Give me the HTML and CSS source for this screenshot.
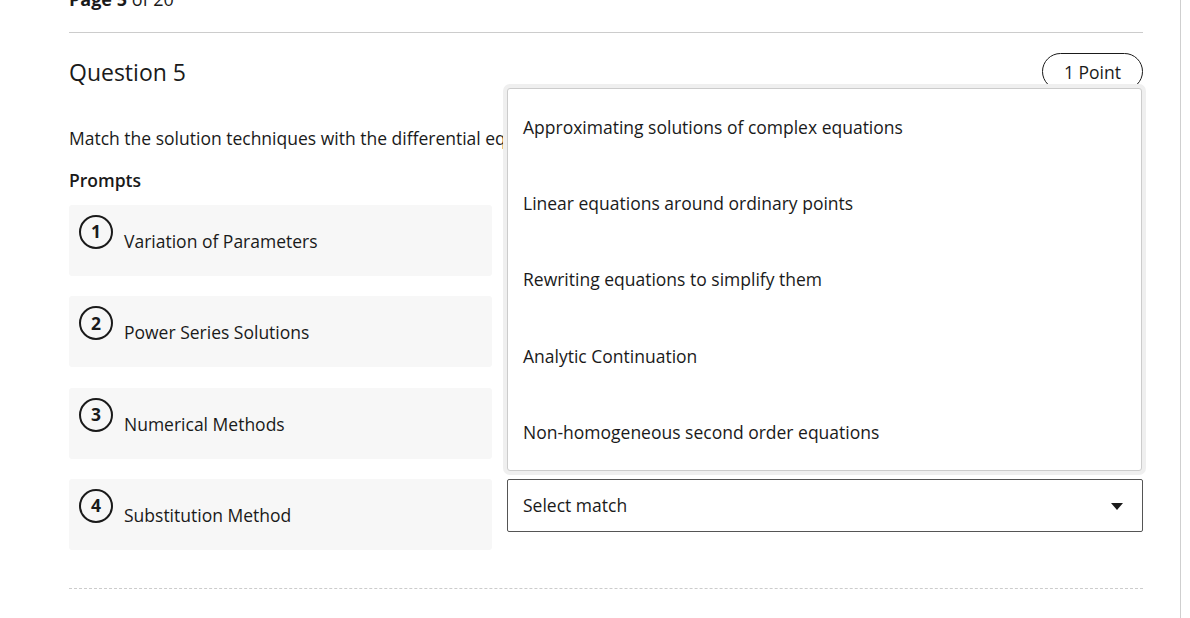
FILE: index.html
```html
<!DOCTYPE html>
<html>
<head>
<meta charset="utf-8">
<link rel="stylesheet" href="styles.css">
</head>
<body>
<div class="frame">
  <div class="page">
    <div class="pager"><b>Page 5</b> of 20</div>
    <div class="question">
      <div class="q-head">
        <h2 class="q-title">Question 5</h2>
        <span class="points">1 Point</span>
      </div>
      <p class="q-text">Match the solution techniques with the differential equations they are used for.</p>
      <div class="prompts-label">Prompts</div>
      <div class="rows">
        <div class="row">
          <div class="prompt"><span class="num">1</span><span class="ptext">Variation of Parameters</span></div>
          <div class="select-wrap"><div class="select"><span>Select match</span><span class="caret"></span></div></div>
        </div>
        <div class="row">
          <div class="prompt"><span class="num">2</span><span class="ptext">Power Series Solutions</span></div>
          <div class="select-wrap"><div class="select"><span>Select match</span><span class="caret"></span></div></div>
        </div>
        <div class="row">
          <div class="prompt"><span class="num">3</span><span class="ptext">Numerical Methods</span></div>
          <div class="select-wrap"><div class="select"><span>Select match</span><span class="caret"></span></div></div>
        </div>
        <div class="row">
          <div class="prompt"><span class="num">4</span><span class="ptext">Substitution Method</span></div>
          <div class="select-wrap">
            <div class="select"><span>Select match</span><span class="caret"></span></div>
            <ul class="menu">
              <li>Approximating solutions of complex equations</li>
              <li>Linear equations around ordinary points</li>
              <li>Rewriting equations to simplify them</li>
              <li>Analytic Continuation</li>
              <li>Non-homogeneous second order equations</li>
            </ul>
          </div>
        </div>
      </div>
      <div class="q-end"></div>
    </div>
  </div>
</div>
</body>
</html>
```
FILE: styles.css
```css
* { box-sizing: border-box; }
html, body { margin: 0; padding: 0; background: #fff; overflow: hidden; }
body {
  font-family: "Open Sans", "Noto Sans", "Liberation Sans", sans-serif;
  color: #1a1a1a;
  font-size: 17.5px;
}
.frame {
  width: 1181px;
  height: 618px;
  border-right: 1px solid #cfcfcf;
  overflow: hidden;
}
.page {
  margin-left: 69px;
  width: 1074px;
  margin-top: -13px;
}
.pager {
  font-size: 18px;
  line-height: 24px;
  padding-bottom: 21px;
  border-bottom: 1px solid #cccccc;
}
.pager b { font-weight: 700; }
.q-head {
  display: flex;
  justify-content: space-between;
  align-items: center;
  margin-top: 20px;
  height: 37px;
}
.q-title {
  margin: 0;
  font-size: 23px;
  font-weight: 500;
  line-height: 30px;
}
.points {
  display: flex;
  align-items: center;
  justify-content: center;
  width: 101px;
  height: 37px;
  border: 1px solid #1a1a1a;
  border-radius: 19px;
  font-size: 17.5px;
  font-weight: 500;
}
.q-text {
  margin: 36px 0 0;
  line-height: 24px;
  white-space: nowrap;
}
.prompts-label {
  margin-top: 18px;
  line-height: 24px;
  font-weight: 600;
}
.rows {
  margin-top: 13px;
  display: flex;
  flex-direction: column;
  gap: 20.3px;
}
.row {
  display: flex;
  gap: 15px;
  align-items: flex-start;
}
.prompt {
  width: 423px;
  height: 71px;
  background: #f7f7f7;
  border-radius: 3px;
  display: flex;
  align-items: center;
  padding: 0 10px 0 10px;
}
.num {
  align-self: flex-start;
  margin-top: 10px;
  width: 34px;
  height: 34px;
  flex: none;
  border: 2px solid #1a1a1a;
  border-radius: 50%;
  display: flex;
  align-items: center;
  justify-content: center;
  font-weight: 700;
  font-size: 17.5px;
  line-height: 1;
}
.ptext {
  margin-left: 11px;
  margin-top: 1px;
  line-height: 24px;
}
.select-wrap {
  position: relative;
  width: 636px;
}
.select {
  height: 53px;
  border: 1px solid #555;
  border-radius: 2px;
  display: flex;
  align-items: center;
  justify-content: space-between;
  padding: 0 19px 0 15px;
  background: #fff;
}
.caret {
  width: 0;
  height: 0;
  border-left: 6px solid transparent;
  border-right: 6px solid transparent;
  border-top: 7px solid #1a1a1a;
  margin-top: 2px;
}
.menu {
  position: absolute;
  left: 0;
  right: 1px;
  bottom: calc(100% + 8px);
  margin: 0;
  padding: 0;
  list-style: none;
  background: #fff;
  border: 1px solid #cccccc;
  border-radius: 3px;
  box-shadow: 0 0 0 4px #efefef;
}
.menu li {
  padding: 26px 15px;
  line-height: 24px;
  height: 76.2px;
}
.q-end {
  margin-top: 38px;
  border-top: 1px dashed #cccccc;
}
```
